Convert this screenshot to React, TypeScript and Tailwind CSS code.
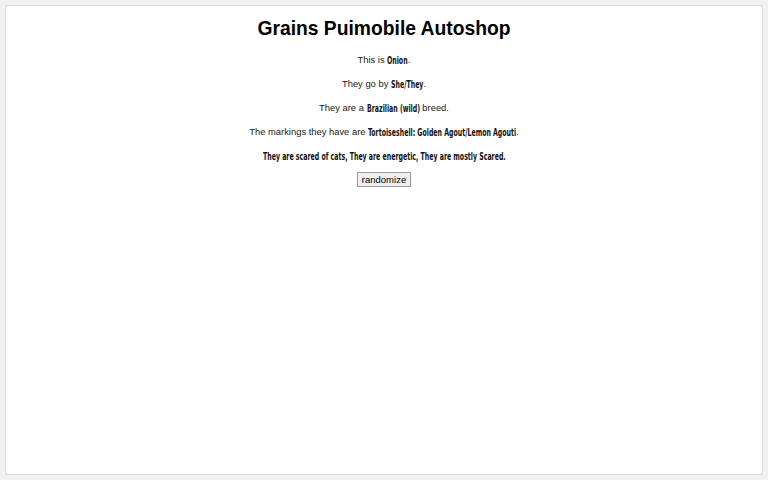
import { useLayoutEffect, useRef, useState } from "react";

const lines: { lead: string; bold: string; tail?: string }[] = [
  { lead: "This is ", bold: "Onion", tail: "." },
  { lead: "They go by ", bold: "She/They", tail: "." },
  { lead: "They are a ", bold: "Brazilian (wild)", tail: " breed." },
  { lead: "The markings they have are ", bold: "Tortoiseshell: Golden Agout/Lemon Agouti", tail: "." },
  { lead: "", bold: "They are scared of cats, They are energetic, They are mostly Scared." },
];

const SCALE = 0.66;

// no narrow display font offline, so squeeze a condensed one and give back the lost width
function Narrow({ children }: { children: string }) {
  const ref = useRef<HTMLSpanElement>(null);
  const [w, setW] = useState(0);
  useLayoutEffect(() => {
    if (ref.current) setW(ref.current.offsetWidth);
  }, [children]);
  return (
    <span
      ref={ref}
      className="inline-block origin-left text-[10.5px] leading-[12px] font-bold text-[#111] align-top"
      style={{
        fontFamily: '"DejaVu Sans Condensed", sans-serif',
        transform: `scaleX(${SCALE})`,
        marginRight: -(1 - SCALE) * w,
      }}
    >
      {children}
    </span>
  );
}

export default function App() {
  return (
    <div className="min-h-screen bg-[#f1f1f1] p-[5px]" style={{ fontFamily: '"Liberation Sans", Arial, sans-serif' }}>
      <div className="h-[470px] bg-white border border-[#dcdcdc] flex flex-col items-center text-black">
        <h1 className="mt-[11px] text-[19.3px] leading-[24px] font-bold">Grains Puimobile Autoshop</h1>
        <div className="mt-[13px] flex flex-col items-center gap-[12px]">
          {lines.map((l, i) => (
            <p key={i} className="h-[12px] text-[9.4px] leading-[12px] text-[#222] whitespace-pre">
              {l.lead}
              <Narrow>{l.bold}</Narrow>
              {l.tail}
            </p>
          ))}
        </div>
        <button className="mt-[10px] h-[15px] px-[4px] text-[9.5px] leading-[13px] bg-[#f0f0f0] border border-[#9a9a9a] text-black">
          randomize
        </button>
      </div>
    </div>
  );
}
